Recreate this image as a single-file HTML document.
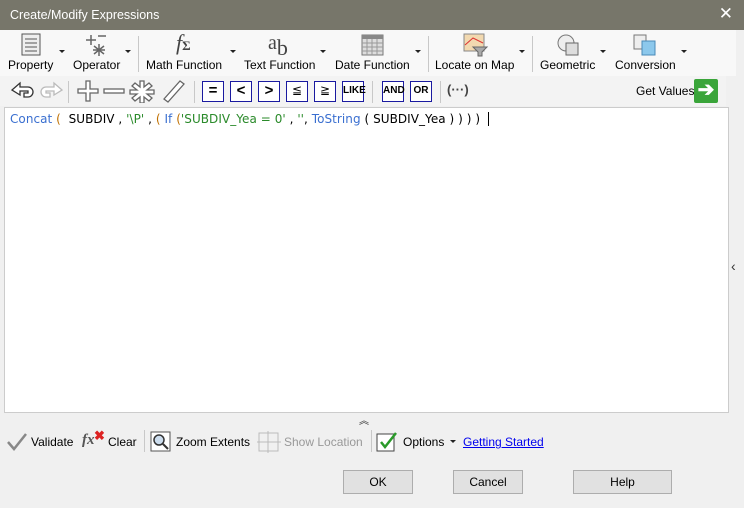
<!DOCTYPE html>
<html><head><style>
*{box-sizing:border-box;margin:0;padding:0}
body{width:744px;height:508px;overflow:hidden;background:#f0f0f0;font-family:"Liberation Sans",sans-serif;font-size:12px;color:#000;position:relative}
.a{position:absolute}
.title{left:0;top:0;width:744px;height:30px;background:#77766a;color:#fff;font-size:12.5px;padding:8px 0 0 10px}
.tb1{left:0;top:30px;width:736px;height:46px;background:#f8f8f8}
.lbl{position:absolute;top:58px;font-size:12px;white-space:nowrap}
.dd{position:absolute;top:50px;width:0;height:0;border-left:3px solid transparent;border-right:3px solid transparent;border-top:3px solid #222}
.sep{position:absolute;width:1px;background:#c8c8c8}
.tb2{left:0;top:76px;width:726px;height:30px;background:#f3f3f3}
.box{position:absolute;top:81px;height:21px;border:1.5px solid #1a1aa0;background:#fff;font-size:15px;font-weight:bold;text-align:center;line-height:17px}
.sm{font-size:10px;font-family:"Liberation Sans Narrow","Liberation Sans",sans-serif}
.md{font-size:12px;font-weight:normal}
.ed{left:4px;top:107px;width:725px;height:306px;background:#fff;border:1px solid #ccc}
.code{left:10px;top:112px;font-family:"DejaVu Sans",sans-serif;font-size:12px;white-space:pre;letter-spacing:0.05px}
.b{color:#3a6fd0}.o{color:#c07000}.g{color:#2a8a2a}
.btn{position:absolute;top:470px;height:24px;border:1px solid #adadad;background:#e1e1e1;text-align:center;line-height:22px}
</style></head><body>
<div class="a title">Create/Modify Expressions<span style="position:absolute;right:11px;top:4px;font-size:17px;font-weight:300">✕</span></div>
<div class="a tb1"></div>
<svg class="a" style="left:20px;top:33px" width="24" height="24"><rect x="2" y="1" width="18" height="21" fill="#eee" stroke="#555"/><g stroke="#555"><line x1="5" y1="6" x2="17" y2="6"/><line x1="5" y1="10" x2="17" y2="10"/><line x1="5" y1="14" x2="17" y2="14"/><line x1="5" y1="18" x2="17" y2="18"/></g></svg>
<svg class="a" style="left:84px;top:32px" width="28" height="24"><g stroke="#666" fill="none" stroke-width="1.5"><path d="M2 8h10M7 3v10M14 4h8M10 14l10 8M20 14l-10 8M15 12v12M9 18h12"/></g></svg>
<div class="a" style="left:176px;top:30px;font-family:'Liberation Serif',serif;font-style:italic;font-size:22px;color:#444">f<span style="font-size:13px;font-style:normal;font-weight:bold">Σ</span></div>
<div class="a" style="left:268px;top:29px;font-family:'Liberation Serif',serif;font-size:20px;color:#444">a<span style="font-size:22px;position:relative;top:6px">b</span></div>
<svg class="a" style="left:361px;top:34px" width="24" height="22"><rect x="1" y="1" width="21" height="20" fill="#ddd" stroke="#777"/><rect x="1" y="1" width="21" height="4" fill="#888"/><g stroke="#999"><line x1="1" y1="9" x2="22" y2="9"/><line x1="1" y1="13" x2="22" y2="13"/><line x1="1" y1="17" x2="22" y2="17"/><line x1="6" y1="5" x2="6" y2="21"/><line x1="11" y1="5" x2="11" y2="21"/><line x1="16" y1="5" x2="16" y2="21"/></g></svg>
<svg class="a" style="left:463px;top:33px" width="26" height="24"><rect x="1" y="1" width="20" height="17" fill="#f2d9b0" stroke="#888"/><path d="M2 12L10 5L20 10" stroke="#d33" fill="none"/><path d="M10 14h14l-5 5v4h-4v-4z" fill="#aaa" stroke="#666"/></svg>
<svg class="a" style="left:556px;top:33px" width="26" height="24"><circle cx="10" cy="10" r="8" fill="#eee" stroke="#777"/><rect x="10" y="10" width="12" height="12" fill="#ddd" stroke="#666"/></svg>
<svg class="a" style="left:632px;top:33px" width="26" height="24"><rect x="2" y="2" width="12" height="14" fill="#eee" stroke="#777"/><rect x="10" y="8" width="13" height="14" fill="#8cc8ec" stroke="#4a8ab8"/></svg>
<div class="lbl" style="left:8px">Property</div><div class="dd" style="left:59px"></div>
<div class="lbl" style="left:73px">Operator</div><div class="dd" style="left:125px"></div>
<div class="sep" style="left:138px;top:36px;height:36px"></div>
<div class="lbl" style="left:146px">Math Function</div><div class="dd" style="left:230px"></div>
<div class="lbl" style="left:244px">Text Function</div><div class="dd" style="left:320px"></div>
<div class="lbl" style="left:335px">Date Function</div><div class="dd" style="left:415px"></div>
<div class="sep" style="left:428px;top:36px;height:36px"></div>
<div class="lbl" style="left:435px">Locate on Map</div><div class="dd" style="left:519px"></div>
<div class="sep" style="left:532px;top:36px;height:36px"></div>
<div class="lbl" style="left:540px">Geometric</div><div class="dd" style="left:600px"></div>
<div class="lbl" style="left:615px">Conversion</div><div class="dd" style="left:681px"></div>
<div class="a tb2"></div>
<svg class="a" style="left:8px;top:80px" width="60" height="22"><path d="M4 10l8-7v4h8a5 5 0 0 1 0 10h-4v-4h4v-2h-8v4z" fill="#fff" stroke="#333" stroke-width="1.3"/><path d="M54 10l-8-7v4h-8a5 5 0 0 0 0 10h4v-4h-4v-2h8v4z" fill="#fff" stroke="#bbb" stroke-width="1.3"/></svg>
<div class="sep" style="left:68px;top:81px;height:22px"></div>
<svg class="a" style="left:76px;top:79px" width="112" height="24"><g fill="#fff" stroke="#666" stroke-width="1.3"><path d="M10 2h4v8h8v4h-8v8h-4v-8H2v-4h8z"/><rect x="28" y="10" width="20" height="4"/><path d="M64 2h4v6l5-4 3 3-5 4h7v4h-7l5 4-3 3-5-4v6h-4v-6l-5 4-3-3 5-4h-7v-4h7l-5-4 3-3 5 4z"/><path d="M104 2l4 3-16 18-4-3z"/></g></svg>
<div class="sep" style="left:194px;top:81px;height:22px"></div>
<div class="box" style="left:202px;width:22px">=</div>
<div class="box" style="left:230px;width:22px">&lt;</div>
<div class="box" style="left:258px;width:22px">&gt;</div>
<div class="box md" style="left:286px;width:22px">≦</div>
<div class="box md" style="left:314px;width:22px">≧</div>
<div class="box sm" style="left:342px;width:22px">LIKE</div>
<div class="sep" style="left:372px;top:81px;height:22px"></div>
<div class="box sm" style="left:382px;width:22px">AND</div>
<div class="box sm" style="left:410px;width:22px">OR</div>
<div class="sep" style="left:440px;top:81px;height:22px"></div>
<div class="a" style="left:447px;top:82px;font-weight:bold;font-size:13px;color:#444">(···)</div>
<div class="a" style="left:636px;top:84px">Get Values</div>
<div class="a" style="left:694px;top:79px;width:24px;height:24px;background:#3aa53a;border-radius:2px;color:#fff;font-size:20px;font-weight:bold;line-height:22px;text-align:center">➔</div>
<div class="a ed"></div>
<div class="a code"><span class="b">Concat</span> <span class="o">(</span>  SUBDIV , <span class="g">'\P'</span> , <span class="o">(</span> <span class="b">If</span> <span class="o">(</span><span class="g">'SUBDIV_Yea = 0'</span> , <span class="g">''</span>, <span class="b">ToString</span> ( SUBDIV_Yea ) ) ) )  <span style="border-left:1px solid #000"> </span></div>
<div class="a" style="left:731px;top:258px;font-size:14px;color:#333">‹</div>
<div class="a" style="left:359px;top:412px;font-size:10px;color:#333">︽</div>
<svg class="a" style="left:6px;top:432px" width="22" height="20"><path d="M2 10l6 7L20 2" fill="none" stroke="#888" stroke-width="2.5"/></svg>
<div class="a" style="left:31px;top:435px">Validate</div>
<div class="a" style="left:82px;top:432px;font-family:'Liberation Serif',serif;font-style:italic;font-weight:bold;font-size:15px;color:#555">fx</div>
<div class="a" style="left:94px;top:428px;color:#d22;font-weight:bold;font-size:13px">✖</div>
<div class="a" style="left:108px;top:435px">Clear</div>
<div class="sep" style="left:144px;top:430px;height:22px"></div>
<svg class="a" style="left:150px;top:431px" width="22" height="22"><rect x="1" y="1" width="19" height="19" fill="#fff" stroke="#555"/><circle cx="9" cy="9" r="5" fill="#cde" stroke="#333" stroke-width="1.5"/><line x1="13" y1="13" x2="18" y2="18" stroke="#333" stroke-width="2"/></svg>
<div class="a" style="left:176px;top:435px">Zoom Extents</div>
<svg class="a" style="left:257px;top:431px" width="24" height="22"><g stroke="#bbb" fill="none"><rect x="2" y="2" width="19" height="18"/><line x1="11" y1="0" x2="11" y2="22"/><line x1="0" y1="11" x2="24" y2="11"/></g></svg>
<div class="a" style="left:284px;top:435px;color:#999">Show Location</div>
<div class="sep" style="left:371px;top:430px;height:22px"></div>
<svg class="a" style="left:376px;top:431px" width="22" height="22"><rect x="1" y="3" width="17" height="17" fill="#fff" stroke="#444"/><path d="M5 11l4 5L20 2" fill="none" stroke="#2a9a2a" stroke-width="2.5"/></svg>
<div class="a" style="left:403px;top:435px">Options</div><div class="dd" style="left:450px;top:440px"></div>
<div class="a" style="left:463px;top:435px;color:#00e;text-decoration:underline">Getting Started</div>
<div class="btn" style="left:343px;width:70px">OK</div>
<div class="btn" style="left:453px;width:70px">Cancel</div>
<div class="btn" style="left:573px;width:99px">Help</div>
</body></html>
